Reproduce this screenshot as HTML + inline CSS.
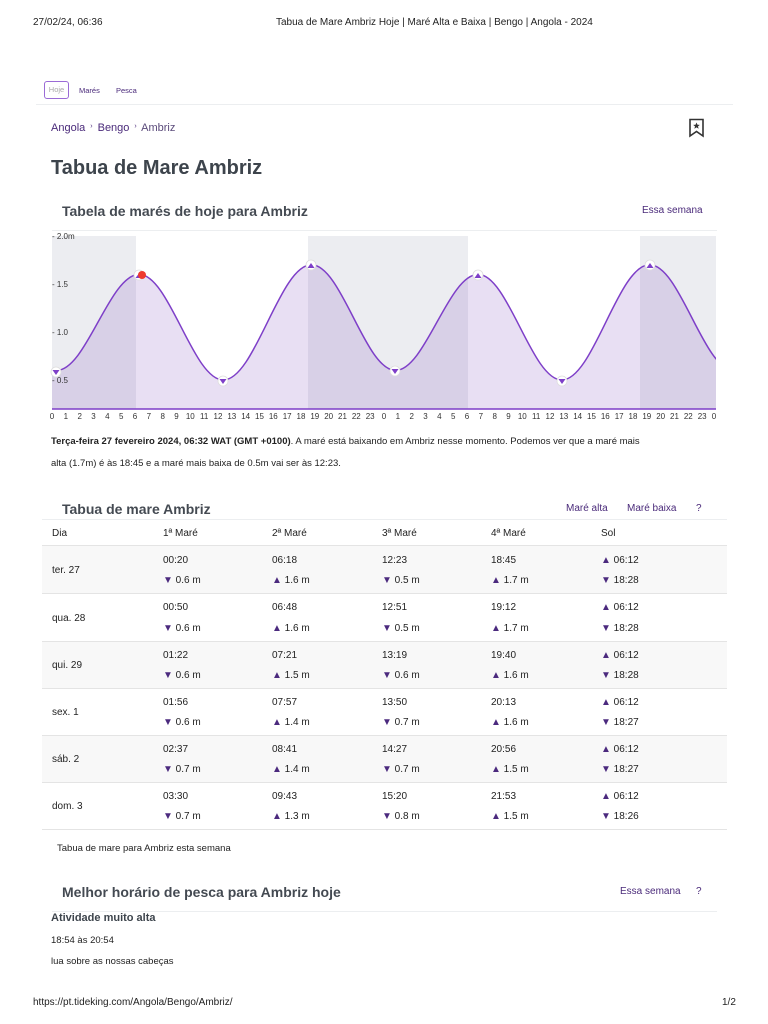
<!DOCTYPE html>
<html><head><meta charset="utf-8">
<style>
*{margin:0;padding:0;box-sizing:border-box}
body{width:768px;height:1024px;background:#fff;font-family:"Liberation Sans",sans-serif;color:#222;position:relative;overflow:hidden}
.a{position:absolute;white-space:nowrap}
.p{color:#4a2a7a}
.h2{font-size:14px;font-weight:bold;color:#444a52}
.t{font-size:10px;color:#222}
.row{position:absolute;left:42px;width:685px;border-bottom:1px solid #e4e4e4}
.c{position:absolute;font-size:10px;color:#222}
.tri{color:#4b2a7e;font-size:10px}
</style></head><body>
<div class="a" style="left:33px;top:17px;font-size:10px">27/02/24, 06:36</div>
<div class="a" style="left:276px;top:17px;font-size:10px">Tabua de Mare Ambriz Hoje | Maré Alta e Baixa | Bengo | Angola - 2024</div>

<div class="a" style="left:44px;top:81px;width:25px;height:18px;border:1px solid #9b6bd6;border-radius:3px;font-size:7.5px;color:#aaa;text-align:center;line-height:16px">Hoje</div>
<div class="a p" style="left:79px;top:86px;font-size:7.5px">Marés</div>
<div class="a p" style="left:116px;top:86px;font-size:7.5px">Pesca</div>
<div class="a" style="left:36px;top:104px;width:697px;height:1px;background:#eceef0"></div>

<div class="a p" style="left:51px;top:122px;font-size:11px">Angola <span style="font-size:7px;vertical-align:3px">&nbsp;›&nbsp;</span> Bengo <span style="font-size:7px;vertical-align:3px">&nbsp;›&nbsp;</span> <span style="color:#5a4a7a">Ambriz</span></div>
<svg class="a" style="left:688px;top:118px" width="18" height="20" viewBox="0 0 18 20"><path d="M2 1.5h13v16.5l-6.5-4.5-6.5 4.5z" fill="none" stroke="#333" stroke-width="1.6"/><path d="M8.5 4.5l1 2.2 2.3.2-1.8 1.5.6 2.3-2.1-1.3-2.1 1.3.6-2.3-1.8-1.5 2.3-.2z" fill="#333"/></svg>

<div class="a" style="left:51px;top:157px;font-size:20px;font-weight:bold;color:#3d444c">Tabua de Mare Ambriz</div>

<div class="a h2" style="left:62px;top:203px">Tabela de marés de hoje para Ambriz</div>
<div class="a p" style="left:642px;top:205px;font-size:10px">Essa semana</div>
<div class="a" style="left:52px;top:230px;width:665px;height:1px;background:#eceef0"></div>

<svg class="a" style="left:0;top:0" width="768" height="430">
<defs><clipPath id="cp"><rect x="52" y="200" width="664" height="230"/></clipPath></defs>
<rect x="52" y="236" width="84" height="173" fill="#ecedf1"/>
<rect x="308" y="236" width="160" height="173" fill="#ecedf1"/>
<rect x="640" y="236" width="76" height="173" fill="#ecedf1"/>
<g clip-path="url(#cp)">
<path d="M-26.8 274.4 C3.2 274.4 26.6 370.4 56.6 370.4 C86.3 370.4 109.4 274.4 139.1 274.4 C169.4 274.4 193 380 223.3 380 C255 380 279.7 264.8 311.4 264.8 C341.7 264.8 365.2 370.4 395.5 370.4 C425.2 370.4 448.4 274.4 478.1 274.4 C508.2 274.4 531.7 380 561.8 380 C593.4 380 618 264.8 649.6 264.8 C680 264.8 703.6 370.4 734 370.4 L734 409 L-26.8 409Z" fill="rgba(140,95,195,0.2)"/>
<path d="M-26.8 274.4 C3.2 274.4 26.6 370.4 56.6 370.4 C86.3 370.4 109.4 274.4 139.1 274.4 C169.4 274.4 193 380 223.3 380 C255 380 279.7 264.8 311.4 264.8 C341.7 264.8 365.2 370.4 395.5 370.4 C425.2 370.4 448.4 274.4 478.1 274.4 C508.2 274.4 531.7 380 561.8 380 C593.4 380 618 264.8 649.6 264.8 C680 264.8 703.6 370.4 734 370.4" fill="none" stroke="#7e3fc8" stroke-width="1.5"/>
</g>
<line x1="52" y1="409" x2="716" y2="409" stroke="#7e3fc8" stroke-width="1.5"/>
<g fill="#fff" stroke="#ddd" stroke-width="0.8">
<circle cx="56" cy="372" r="5"/><circle cx="139" cy="275" r="5"/><circle cx="223" cy="381" r="5"/><circle cx="311" cy="265" r="5"/><circle cx="395" cy="371" r="5"/><circle cx="478" cy="275" r="5"/><circle cx="562" cy="381" r="5"/><circle cx="650" cy="265" r="5"/></g>
<g fill="#7e3fc8">
<path d="M52.5 370h7l-3.5 5z"/><path d="M219.5 379h7l-3.5 5z"/><path d="M391.5 369h7l-3.5 5z"/><path d="M558.5 379h7l-3.5 5z"/>
<path d="M307.5 268h7l-3.5-5z"/><path d="M474.5 278h7l-3.5-5z"/><path d="M646.5 268h7l-3.5-5z"/><path d="M135.5 278h6l-3-4z"/></g>
<circle cx="142" cy="275" r="4" fill="#ee3a2f"/>
<g font-family="Liberation Sans" font-size="8" fill="#333">
<text x="52" y="239">- 2.0m</text><text x="52" y="287">- 1.5</text><text x="52" y="335">- 1.0</text><text x="52" y="383">- 0.5</text>
</g>
<g font-family="Liberation Sans" font-size="8" fill="#333" text-anchor="middle">
<text x="52" y="419">0</text><text x="65.8" y="419">1</text><text x="79.7" y="419">2</text><text x="93.5" y="419">3</text><text x="107.3" y="419">4</text><text x="121.2" y="419">5</text><text x="135" y="419">6</text><text x="148.8" y="419">7</text><text x="162.7" y="419">8</text><text x="176.5" y="419">9</text><text x="190.3" y="419">10</text><text x="204.2" y="419">11</text><text x="218" y="419">12</text><text x="231.8" y="419">13</text><text x="245.7" y="419">14</text><text x="259.5" y="419">15</text><text x="273.3" y="419">16</text><text x="287.2" y="419">17</text><text x="301" y="419">18</text><text x="314.8" y="419">19</text><text x="328.7" y="419">20</text><text x="342.5" y="419">21</text><text x="356.3" y="419">22</text><text x="370.2" y="419">23</text><text x="384" y="419">0</text><text x="397.8" y="419">1</text><text x="411.7" y="419">2</text><text x="425.5" y="419">3</text><text x="439.3" y="419">4</text><text x="453.2" y="419">5</text><text x="467" y="419">6</text><text x="480.8" y="419">7</text><text x="494.7" y="419">8</text><text x="508.5" y="419">9</text><text x="522.3" y="419">10</text><text x="536.2" y="419">11</text><text x="550" y="419">12</text><text x="563.8" y="419">13</text><text x="577.7" y="419">14</text><text x="591.5" y="419">15</text><text x="605.3" y="419">16</text><text x="619.2" y="419">17</text><text x="633" y="419">18</text><text x="646.8" y="419">19</text><text x="660.7" y="419">20</text><text x="674.5" y="419">21</text><text x="688.3" y="419">22</text><text x="702.2" y="419">23</text><text x="714" y="419">0</text>
</g>
</svg>

<div class="a t" style="left:51px;top:436px;font-size:9.5px"><b>Terça-feira 27 fevereiro 2024, 06:32 WAT (GMT +0100)</b>. A maré está baixando em Ambriz nesse momento. Podemos ver que a maré mais</div>
<div class="a t" style="left:51px;top:458px;font-size:9.5px">alta (1.7m) é às 18:45 e a maré mais baixa de 0.5m vai ser às 12:23.</div>

<div class="a h2" style="left:62px;top:501px">Tabua de mare Ambriz</div>
<div class="a p" style="left:566px;top:503px;font-size:10px">Maré alta</div>
<div class="a p" style="left:627px;top:503px;font-size:10px">Maré baixa</div>
<div class="a p" style="left:696px;top:503px;font-size:10px">?</div>
<div class="a" style="left:42px;top:519px;width:685px;height:1px;background:#eceef0"></div>

<div class="row" style="top:520px;height:26px">
<div class="c" style="left:10px;top:8px">Dia</div><div class="c" style="left:121px;top:8px">1ª Maré</div><div class="c" style="left:230px;top:8px">2ª Maré</div><div class="c" style="left:340px;top:8px">3ª Maré</div><div class="c" style="left:449px;top:8px">4ª Maré</div><div class="c" style="left:559px;top:8px">Sol</div></div>

<div class="row" style="top:546px;height:48px;background:#f8f8f8">
<div class="c" style="left:10px;top:19px">ter. 27</div>
<div class="c" style="left:121px;top:9px">00:20</div><div class="c" style="left:121px;top:29px"><span class="tri">▼</span> 0.6 m</div>
<div class="c" style="left:230px;top:9px">06:18</div><div class="c" style="left:230px;top:29px"><span class="tri">▲</span> 1.6 m</div>
<div class="c" style="left:340px;top:9px">12:23</div><div class="c" style="left:340px;top:29px"><span class="tri">▼</span> 0.5 m</div>
<div class="c" style="left:449px;top:9px">18:45</div><div class="c" style="left:449px;top:29px"><span class="tri">▲</span> 1.7 m</div>
<div class="c" style="left:559px;top:9px"><span class="tri">▲</span> 06:12</div><div class="c" style="left:559px;top:29px"><span class="tri">▼</span> 18:28</div></div>

<div class="row" style="top:594px;height:48px">
<div class="c" style="left:10px;top:19px">qua. 28</div>
<div class="c" style="left:121px;top:8px">00:50</div><div class="c" style="left:121px;top:29px"><span class="tri">▼</span> 0.6 m</div>
<div class="c" style="left:230px;top:8px">06:48</div><div class="c" style="left:230px;top:29px"><span class="tri">▲</span> 1.6 m</div>
<div class="c" style="left:340px;top:8px">12:51</div><div class="c" style="left:340px;top:29px"><span class="tri">▼</span> 0.5 m</div>
<div class="c" style="left:449px;top:8px">19:12</div><div class="c" style="left:449px;top:29px"><span class="tri">▲</span> 1.7 m</div>
<div class="c" style="left:559px;top:8px"><span class="tri">▲</span> 06:12</div><div class="c" style="left:559px;top:29px"><span class="tri">▼</span> 18:28</div></div>

<div class="row" style="top:642px;height:47px;background:#f8f8f8">
<div class="c" style="left:10px;top:18px">qui. 29</div>
<div class="c" style="left:121px;top:8px">01:22</div><div class="c" style="left:121px;top:28px"><span class="tri">▼</span> 0.6 m</div>
<div class="c" style="left:230px;top:8px">07:21</div><div class="c" style="left:230px;top:28px"><span class="tri">▲</span> 1.5 m</div>
<div class="c" style="left:340px;top:8px">13:19</div><div class="c" style="left:340px;top:28px"><span class="tri">▼</span> 0.6 m</div>
<div class="c" style="left:449px;top:8px">19:40</div><div class="c" style="left:449px;top:28px"><span class="tri">▲</span> 1.6 m</div>
<div class="c" style="left:559px;top:8px"><span class="tri">▲</span> 06:12</div><div class="c" style="left:559px;top:28px"><span class="tri">▼</span> 18:28</div></div>

<div class="row" style="top:689px;height:47px">
<div class="c" style="left:10px;top:18px">sex. 1</div>
<div class="c" style="left:121px;top:8px">01:56</div><div class="c" style="left:121px;top:28px"><span class="tri">▼</span> 0.6 m</div>
<div class="c" style="left:230px;top:8px">07:57</div><div class="c" style="left:230px;top:28px"><span class="tri">▲</span> 1.4 m</div>
<div class="c" style="left:340px;top:8px">13:50</div><div class="c" style="left:340px;top:28px"><span class="tri">▼</span> 0.7 m</div>
<div class="c" style="left:449px;top:8px">20:13</div><div class="c" style="left:449px;top:28px"><span class="tri">▲</span> 1.6 m</div>
<div class="c" style="left:559px;top:8px"><span class="tri">▲</span> 06:12</div><div class="c" style="left:559px;top:28px"><span class="tri">▼</span> 18:27</div></div>

<div class="row" style="top:736px;height:47px;background:#f8f8f8">
<div class="c" style="left:10px;top:18px">sáb. 2</div>
<div class="c" style="left:121px;top:8px">02:37</div><div class="c" style="left:121px;top:28px"><span class="tri">▼</span> 0.7 m</div>
<div class="c" style="left:230px;top:8px">08:41</div><div class="c" style="left:230px;top:28px"><span class="tri">▲</span> 1.4 m</div>
<div class="c" style="left:340px;top:8px">14:27</div><div class="c" style="left:340px;top:28px"><span class="tri">▼</span> 0.7 m</div>
<div class="c" style="left:449px;top:8px">20:56</div><div class="c" style="left:449px;top:28px"><span class="tri">▲</span> 1.5 m</div>
<div class="c" style="left:559px;top:8px"><span class="tri">▲</span> 06:12</div><div class="c" style="left:559px;top:28px"><span class="tri">▼</span> 18:27</div></div>

<div class="row" style="top:783px;height:47px">
<div class="c" style="left:10px;top:18px">dom. 3</div>
<div class="c" style="left:121px;top:8px">03:30</div><div class="c" style="left:121px;top:28px"><span class="tri">▼</span> 0.7 m</div>
<div class="c" style="left:230px;top:8px">09:43</div><div class="c" style="left:230px;top:28px"><span class="tri">▲</span> 1.3 m</div>
<div class="c" style="left:340px;top:8px">15:20</div><div class="c" style="left:340px;top:28px"><span class="tri">▼</span> 0.8 m</div>
<div class="c" style="left:449px;top:8px">21:53</div><div class="c" style="left:449px;top:28px"><span class="tri">▲</span> 1.5 m</div>
<div class="c" style="left:559px;top:8px"><span class="tri">▲</span> 06:12</div><div class="c" style="left:559px;top:28px"><span class="tri">▼</span> 18:26</div></div>

<div class="a t" style="left:57px;top:843px;font-size:9.5px">Tabua de mare para Ambriz esta semana</div>

<div class="a h2" style="left:62px;top:884px">Melhor horário de pesca para Ambriz hoje</div>
<div class="a p" style="left:620px;top:886px;font-size:10px">Essa semana</div>
<div class="a p" style="left:696px;top:886px;font-size:10px">?</div>
<div class="a" style="left:52px;top:911px;width:665px;height:1px;background:#eceef0"></div>
<div class="a" style="left:51px;top:912px;font-size:11px;font-weight:bold;color:#3d444c">Atividade muito alta</div>
<div class="a t" style="left:51px;top:935px;font-size:9.5px">18:54 às 20:54</div>
<div class="a t" style="left:51px;top:956px;font-size:9.5px">lua sobre as nossas cabeças</div>

<div class="a" style="left:33px;top:997px;font-size:10px">https://pt.tideking.com/Angola/Bengo/Ambriz/</div>
<div class="a" style="left:722px;top:997px;font-size:10px">1/2</div>
</body></html>
